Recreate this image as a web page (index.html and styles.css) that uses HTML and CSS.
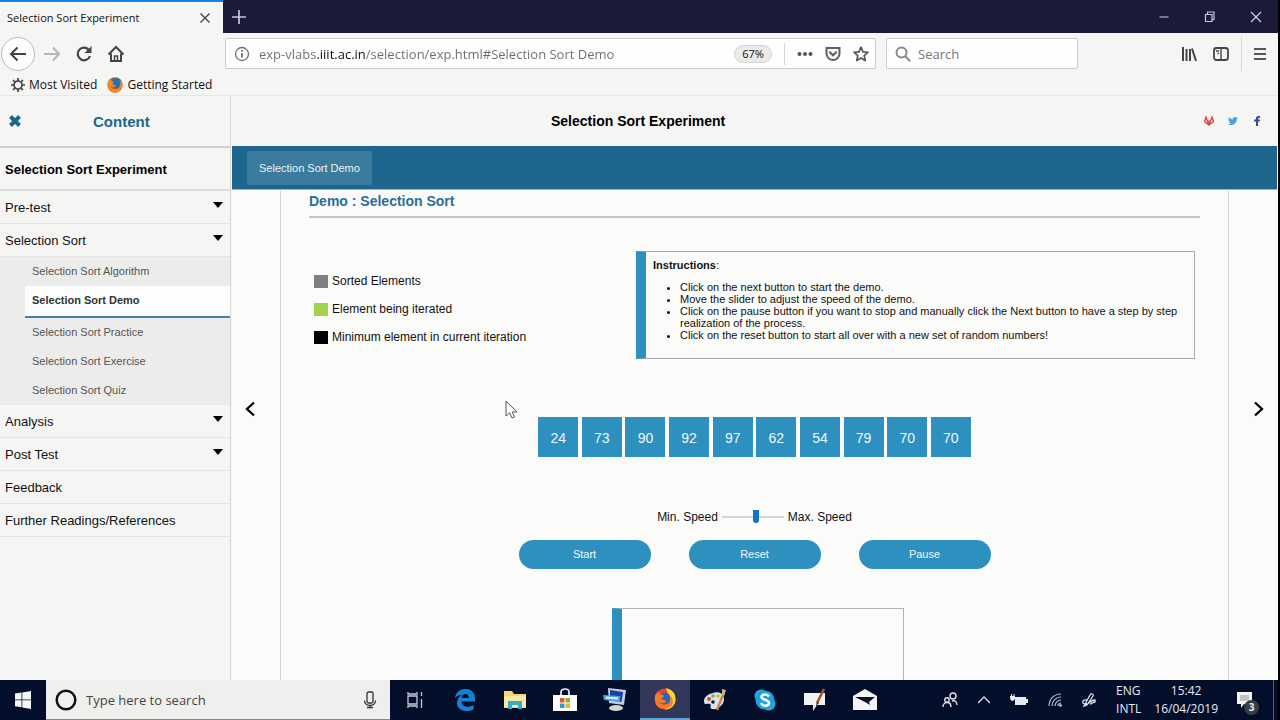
FILE: index.html
```html
<!DOCTYPE html>
<html lang="en">
<head>
    <meta charset="UTF-8">
    <meta name="viewport" content="width=device-width, initial-scale=1.0">
    <title>Selection Sort Experiment</title>
    <link rel="stylesheet" href="styles.css">
</head>
<body>
    <!-- browser window -->
    <div class="titlebar">
        <div class="tab">
            <span>Selection Sort Experiment</span>
            <button class="icon-btn" aria-label="Close tab">
                <svg width="12" height="12" viewBox="0 0 12 12"><path d="M1.5 1.5l9 9M10.5 1.5l-9 9" stroke="#444" stroke-width="1.4"/></svg>
            </button>
        </div>
        <button class="icon-btn new-tab" aria-label="New tab">
            <svg width="14" height="14" viewBox="0 0 14 14"><path d="M7 0v14M0 7h14" stroke="#c8c7d6" stroke-width="1.7"/></svg>
        </button>
        <div class="window-buttons">
            <button class="icon-btn" aria-label="Minimize"><svg width="12" height="12" viewBox="0 0 12 12"><path d="M1.500 6h9" stroke="#77748f" stroke-width="2"/></svg></button>
            <button class="icon-btn" aria-label="Restore"><svg width="12" height="12" viewBox="0 0 12 12" fill="none" stroke="#c8c7d6" stroke-width="1.200"><path d="M1.500 3.500h6.500v7h-6.500zM3.500 3.500v-2.500h6.500v7.500h-2"/></svg></button>
            <button class="icon-btn" aria-label="Close"><svg width="12" height="12" viewBox="0 0 12 12"><path d="M1 1l10 10M11 1L1 11" stroke="#d5d4e0" stroke-width="1.200"/></svg></button>
        </div>
    </div>
    <div class="toolbar">
        <div class="nav-buttons">
            <button class="icon-btn back" aria-label="Back"><svg width="18" height="16" viewBox="0 0 18 16" fill="none" stroke="#444" stroke-width="2"><path d="M17 8H2M8.500 1.500L2 8l6.500 6.500"/></svg></button>
            <button class="icon-btn" aria-label="Forward"><svg width="18" height="16" viewBox="0 0 18 16" fill="none" stroke="#b5b5b5" stroke-width="2"><path d="M1 8h15M10 1.500L16 8l-6 6.500"/></svg></button>
            <button class="icon-btn" aria-label="Reload"><svg width="18" height="18" viewBox="0 0 18 18"><path d="M15 11a6.300 6.300 0 1 1-1.500-6.500" fill="none" stroke="#444" stroke-width="2.200"/><path d="M16.500 1v7h-7z" fill="#444"/></svg></button>
            <button class="icon-btn" aria-label="Home"><svg width="18" height="18" viewBox="0 0 18 18" fill="none" stroke="#444" stroke-width="2"><path d="M1.500 9.500L9 2l7.500 7.500M4 8.500V16h10V8.500"/><path d="M7.500 16v-5h3v5" stroke-width="1.500"/></svg></button>
        </div>
        <div class="address">
            <svg width="16" height="16" viewBox="0 0 16 16" fill="none" stroke="#707070"><circle cx="8" cy="8" r="6.500" stroke-width="1.300"/><path d="M8 7v4.500M8 4v1.700" stroke-width="1.800"/></svg>
            <input type="text" id="url" aria-label="Address" value="exp-vlabs.iiit.ac.in/selection/exp.html#Selection Sort Demo">
            <button class="zoom-level">67%</button>
            <span class="divider"></span>
            <button class="icon-btn" aria-label="Page actions"><svg width="16" height="16" viewBox="0 0 16 16" fill="#555"><circle cx="2.500" cy="8" r="2"/><circle cx="8" cy="8" r="2"/><circle cx="13.500" cy="8" r="2"/></svg></button>
            <button class="icon-btn" aria-label="Save to Pocket"><svg width="16" height="16" viewBox="0 0 16 16" fill="none" stroke="#606060" stroke-width="2"><path d="M1.500 2h13v5.500a6.500 6.500 0 0 1-13 0z"/><path d="M4.800 6.200L8 9.300l3.200-3.100" stroke-linecap="round"/></svg></button>
            <button class="icon-btn" aria-label="Bookmark"><svg width="16" height="16" viewBox="0 0 16 16" fill="none" stroke="#555" stroke-width="1.700" stroke-linejoin="round"><path d="M8 1.200l2 4.600 4.900.5-3.700 3.300 1.100 5L8 12.100l-4.300 2.500 1.100-5L1.100 6.300 6 5.800z"/></svg></button>
        </div>
        <div class="search">
            <svg width="16" height="16" viewBox="0 0 16 16" fill="none" stroke="#888" stroke-width="2"><circle cx="6.500" cy="6.500" r="5"/><path d="M10.200 10.200l5 5"/></svg>
            <input type="text" aria-label="Search" placeholder="Search">
        </div>
        <div class="tools">
            <button class="icon-btn" aria-label="Library"><svg width="16" height="16" viewBox="0 0 16 16" stroke="#444" stroke-width="2"><path d="M2 1v14M5.500 3v12M9 3v12M11 2.500L15 15"/></svg></button>
            <button class="icon-btn" aria-label="Sidebars"><svg width="16" height="16" viewBox="0 0 16 16" fill="none" stroke="#444" stroke-width="1.800"><rect x="1" y="2" width="14" height="12" rx="2.500"/><path d="M8 2v12M3 5h3M4.500 7.500H6" stroke-width="1.400"/></svg></button>
            <span class="divider"></span>
            <button class="icon-btn" aria-label="Menu"><svg width="12" height="14" viewBox="0 0 12 14" stroke="#555" stroke-width="2"><path d="M0 2h12M0 7h12M0 12h12"/></svg></button>
        </div>
    </div>
    <div class="bookmarks">
        <a href="#"><svg width="14" height="14" viewBox="0 0 14 14" fill="none" stroke="#444"><circle cx="7" cy="7" r="4" stroke-width="1.700"/><path d="M7 0v3M7 11v3M0 7h3M11 7h3M2 2l2 2M10 10l2 2M12 2l-2 2M4 10l-2 2" stroke-width="1.700"/></svg>Most Visited</a>
        <a href="#"><svg width="16" height="16" viewBox="0 0 22 22"><circle cx="11" cy="11" r="10.500" fill="#e8502a"/><circle cx="12.500" cy="8.500" r="7.500" fill="#1f76b5"/><path d="M1 7c1-2 2-3 3-5 0 3 3 3 4 4 2 2 0 3-1 4 2 0 3 1 5 2-1 3-6 3-8-1 0 5 8 8 12 4 3-3 3-7 1-11 5 4 5 10 2 14-5 6-15 3-17-3-1-3-1-5-1-8z" fill="#f58a20"/></svg>Getting Started</a>
    </div>

    <!-- page -->
    <div class="page">
        <nav class="sidebar">
            <div class="sidebar-head">
                <button class="icon-btn" aria-label="Close menu"><svg width="14" height="14" viewBox="0 0 14 14"><path d="M2.500 2.500l9 9M11.500 2.500l-9 9" stroke="#1d678f" stroke-width="4"/></svg></button>
                <h2>Content</h2>
            </div>
            <a class="experiment" href="#">Selection Sort Experiment</a>
            <a class="item" href="#">Pre-test<span class="caret"></span></a>
            <a class="item" href="#">Selection Sort<span class="caret"></span></a>
            <div class="submenu">
                <a href="#">Selection Sort Algorithm</a>
                <a class="active" href="#">Selection Sort Demo</a>
                <a href="#">Selection Sort Practice</a>
                <a href="#">Selection Sort Exercise</a>
                <a href="#">Selection Sort Quiz</a>
            </div>
            <a class="item" href="#">Analysis<span class="caret"></span></a>
            <a class="item" href="#">Post Test<span class="caret"></span></a>
            <a class="item" href="#">Feedback</a>
            <a class="item" href="#">Further Readings/References</a>
        </nav>
        <div class="main">
            <header class="page-head">
                <h1>Selection Sort Experiment</h1>
                <div class="social">
                    <a href="#" aria-label="GitLab"><svg width="10" height="10" viewBox="0 0 20 20" fill="none" stroke="#d63a3a" stroke-width="2.500"><path d="M4 2L1 11l9 7 9-7-3-9-3 8H7zM7 10l3 8 3-8"/></svg></a>
                    <a href="#" aria-label="Twitter"><svg width="10" height="10" viewBox="0 0 24 24" fill="#4a9fe0"><path d="M24 4.600a10 10 0 0 1-2.800.8 5 5 0 0 0 2.100-2.700 10 10 0 0 1-3.100 1.200 4.900 4.900 0 0 0-8.400 4.500A14 14 0 0 1 1.700 3.200a4.900 4.900 0 0 0 1.500 6.500 5 5 0 0 1-2.200-.6c0 2.300 1.600 4.400 3.900 4.900a5 5 0 0 1-2.200.1 4.900 4.900 0 0 0 4.600 3.400A10 10 0 0 1 0 19.500 14 14 0 0 0 21.500 7.100 10 10 0 0 0 24 4.600z"/></svg></a>
                    <a href="#" aria-label="Facebook"><svg width="10" height="10" viewBox="0 0 20 20" fill="#35508f"><path d="M8 20v-9H4V7h4V5c0-3.500 2-5 5-5h3v4h-2c-1.500 0-2 .5-2 1.500V7h4l-.6 4H12v9z"/></svg></a>
                </div>
            </header>
            <div class="tab-bar">
                <button>Selection Sort Demo</button>
            </div>
            <div class="content">
                <button class="arrow" aria-label="Previous"><svg width="12" height="16" viewBox="0 0 12 16"><path d="M10 1.500L3 8l7 6.500" fill="none" stroke="#000" stroke-width="2.300"/></svg></button>
                <div class="panel">
                    <h2>Demo : Selection Sort</h2>
                    <div class="info">
                        <ul class="legend">
                            <li><span class="swatch sorted"></span>Sorted Elements</li>
                            <li><span class="swatch iterated"></span>Element being iterated</li>
                            <li><span class="swatch minimum"></span>Minimum element in current iteration</li>
                        </ul>
                        <div class="instructions">
                            <p><b>Instructions</b>:</p>
                            <ul>
                                <li>Click on the next button to start the demo.</li>
                                <li>Move the slider to adjust the speed of the demo.</li>
                                <li>Click on the pause button if you want to stop and manually click the Next button to have a step by step realization of the process.</li>
                                <li>Click on the reset button to start all over with a new set of random numbers!</li>
                            </ul>
                        </div>
                    </div>
                    <div class="array">
                        <span>24</span>
                        <span>73</span>
                        <span>90</span>
                        <span>92</span>
                        <span>97</span>
                        <span>62</span>
                        <span>54</span>
                        <span>79</span>
                        <span>70</span>
                        <span>70</span>
                    </div>
                    <div class="speed">
                        <label for="speed">Min. Speed</label>
                        <input type="range" id="speed" min="0" max="100" value="55">
                        <label for="speed">Max. Speed</label>
                    </div>
                    <div class="controls">
                        <button>Start</button>
                        <button>Reset</button>
                        <button>Pause</button>
                    </div>
                    <div class="output"></div>
                </div>
                <button class="arrow" aria-label="Next"><svg width="12" height="16" viewBox="0 0 12 16"><path d="M2 1.500L9 8l-7 6.500" fill="none" stroke="#000" stroke-width="2.300"/></svg></button>
            </div>
        </div>
    </div>

    <!-- windows taskbar -->
    <div class="taskbar">
        <button class="start" aria-label="Start menu"><svg width="16" height="18" viewBox="0 0 16 18" fill="#f4f6fa"><path d="M0 2.500l6.500-1v7H0zM7.300 1.400L16 0v8.500H7.300zM0 9.300h6.500v7l-6.500-1zM7.300 9.300H16V18l-8.700-1.500z"/></svg></button>
        <div class="task-search">
            <svg width="22" height="22" viewBox="0 0 22 22"><circle cx="11" cy="11" r="9.300" fill="none" stroke="#111" stroke-width="2.500"/></svg>
            <input type="text" aria-label="Type here to search" placeholder="Type here to search">
            <svg width="14" height="18" viewBox="0 0 14 18" fill="none" stroke="#333" stroke-width="1.300"><rect x="4" y="1" width="6" height="11" rx="1.500"/><path d="M1.500 9.500c0 6.500 11 6.500 11 0M7 14v3M4 16.500h6"/></svg>
        </div>
        <div class="apps">
            <button aria-label="Task view"><svg width="18" height="18" viewBox="0 0 18 18" fill="none" stroke="#c6cbd8" stroke-width="1.300"><path d="M2 5h9v8H2zM2 1v2h9V1M2 17v-2h9v2M15.500 1v4M15.500 8v9"/></svg></button>
            <button aria-label="Edge"><svg width="22" height="24" viewBox="0 0 22 24"><path d="M1 10C2 3 7 1 12 1c6 0 9 4.500 9 10v2.500H7.500c.2 6 7.500 6.500 12 3.500v4.500C12 25 3 22.500 3 15c0-4 2.500-6.500 5-8-3 .3-5.500 1-7 3zM7.500 10H15c0-5-7-5.500-7.500 0z" fill="#1482d4"/></svg></button>
            <button aria-label="File Explorer"><svg width="22" height="20" viewBox="0 0 22 20"><path d="M0 1h8l2 3h12v14H0z" fill="#f3d777"/><path d="M0 6h22v11H0z" fill="#fae89f"/><path d="M4 11h14v8h-4v-4H8v4H4z" fill="#37abd0"/></svg></button>
            <button aria-label="Store"><svg width="24" height="24" viewBox="0 0 24 24"><path d="M8 7V4c0-4 8-4 8 0v3" fill="none" stroke="#eee" stroke-width="1.700"/><path d="M0 7h24v16H0z" fill="#fff"/><path d="M7 10h4.500v4.500H7z" fill="#e2572c"/><path d="M12.500 10H17v4.500h-4.500z" fill="#83b530"/><path d="M7 15.500h4.500V20H7z" fill="#2c9ad8"/><path d="M12.500 15.500H17V20h-4.500z" fill="#f0b428"/></svg></button>
            <button aria-label="Remote desktop"><svg width="26" height="26" viewBox="0 0 26 26"><path d="M6 1l18 2-2 15-15-2z" fill="#c5cddb"/><path d="M8 3l13 2-1.500 10L8 13.500z" fill="#1b3fa8"/><path d="M1 8l17 1v6L2 13z" fill="#4aa6e6"/><path d="M4 10.500l12 1" stroke="#e0f2ff" stroke-width="2"/><ellipse cx="14" cy="21" rx="7" ry="3" fill="#d5d4cc"/></svg></button>
            <button class="open" aria-label="Firefox"><svg width="22" height="22" viewBox="0 0 22 22"><circle cx="11" cy="11" r="10.500" fill="#ec432e"/><path d="M12 0c8 2 10 7 9.500 13-1 6-6 8.500-11 8.500 5-3 7-7 5-13-1-3-3-5-3.500-8.500z" fill="#ffd43b"/><circle cx="10.500" cy="10.500" r="6" fill="#2867b8"/><path d="M1 8c1-2 2-3 3-5 0 3 3 3 5 4 2 1 0 3-2 4 2 0 3 1 5 2-1 3-5 3-7 0 1 4 6 5 10 2 3-3 1-7-1-9 4 2 6 7 4 11-4 6-14 4-16-1-1-3-1-5-1-8z" fill="#f67b24"/></svg></button>
            <button aria-label="Paint"><svg width="24" height="24" viewBox="0 0 24 24"><path d="M10 5c6-2 11 1 11 6 0 6-6 11-12 10-3-1 0-4-2-5S1 18 1 13c0-4 4-7 9-8z" fill="#d8e5f0"/><circle cx="6" cy="11" r="2" fill="#d54a35"/><circle cx="10" cy="8" r="1.800" fill="#78b642"/><circle cx="15" cy="8" r="1.800" fill="#e4b62f"/><circle cx="10" cy="14" r="1.800" fill="#10192d"/><path d="M21 4L14 22" stroke="#ce8440" stroke-width="2.400"/><path d="M19 1l4 1-2 6-2-1z" fill="#d5b17e"/></svg></button>
            <button aria-label="Skype"><svg width="22" height="22" viewBox="0 0 22 22"><circle cx="7" cy="7" r="6.500" fill="#29a9e1"/><circle cx="15" cy="15" r="6.500" fill="#29a9e1"/><circle cx="11" cy="11" r="9.500" fill="#1ca2de"/><path d="M15 7.500C13 4.500 7.500 5 7.500 8s7.500 2.500 7.500 6c0 3.500-6.500 3.500-8 0" fill="none" stroke="#fff" stroke-width="2.500"/></svg></button>
            <button aria-label="Whiteboard"><svg width="22" height="24" viewBox="0 0 22 24"><path d="M0 5h21v12h-8l-4 6v-6H0z" fill="#f3f3f3"/><path d="M20 1l-7 14" stroke="#a95430" stroke-width="2.600"/><path d="M13 14l-1 4 3-3z" fill="#222"/></svg></button>
            <button aria-label="Mail"><svg width="26" height="22" viewBox="0 0 26 22"><path d="M1 7L13 0l12 7v14H1z" fill="#f4f4f4"/><path d="M3 8h20l-6 5 1 3-5-3z" fill="#07112f"/></svg></button>
        </div>
        <div class="tray">
            <button aria-label="People"><svg width="16" height="16" viewBox="0 0 16 16" fill="none" stroke="#dfe2ea" stroke-width="1.400"><circle cx="11" cy="4" r="3"/><circle cx="5" cy="8" r="2.200"/><path d="M1 15c0-6 8-6 8 0M10 9c3-1 5 1 5 4"/></svg></button>
            <button aria-label="Hidden icons"><svg width="12" height="8" viewBox="0 0 12 8"><path d="M0 7l6-6 6 6" fill="none" stroke="#dfe2ea" stroke-width="1.300"/></svg></button>
            <button aria-label="Battery"><svg width="18" height="14" viewBox="0 0 18 14" fill="#e7e9ef"><path d="M5 4h11v8H5z"/><path d="M16 6h2v4h-2z"/><path d="M0 3h5v3l-2 2H2L0 6zM1 1h1v2H1zM3.500 1h1v2h-1z"/></svg></button>
            <button aria-label="Network"><svg width="14" height="14" viewBox="0 0 14 14" fill="none" stroke="#b5bac8" stroke-width="1.200"><path d="M1 13C1 6 6 1 13 1M4 13c0-5 4-9 9-9M7 13c0-3 3-6 6-6M10 13c0-2 1-3 3-3"/><circle cx="12.500" cy="12.500" r=".8" fill="#fff"/></svg></button>
            <button aria-label="Windows Ink"><svg width="14" height="16" viewBox="0 0 14 16" fill="none" stroke="#dfe2ea" stroke-width="1.300"><path d="M2 14L8 3c1-2 4-1 3 1L5 13l-3 1zM5 8c-5-1-6 4-1 4 4 0 4-4 9-4v2c-3 0-3 2-5 2"/></svg></button>
            <div class="tray-text"><span>ENG</span><span>INTL</span></div>
            <div class="tray-text clock"><span>15:42</span><span>16/04/2019</span></div>
            <button class="notify" aria-label="Notifications"><svg width="18" height="18" viewBox="0 0 18 18"><path d="M1 1h15v12H8l-3 4v-4H1z" fill="#f4f4f4"/><path d="M4 4h9v6H4z" fill="#bfc3ca"/></svg><span class="badge">3</span></button>
        </div>
    </div>
    <svg class="pointer" width="13" height="19" viewBox="0 0 13 19"><path d="M1 1v15l3.500-3.200L7 18l2.500-1-2.300-5H12z" fill="#fff" stroke="#555"/></svg>
</body>
</html>
```
FILE: styles.css
```css
*
{
    margin: 0;
    padding: 0;
    box-sizing: border-box;
}
body
{
    height: 100vh;
    display: flex;
    flex-direction: column;
    overflow: hidden;
    border-right: 2px solid black;
    background-color: #f5f6f4;
    font-family: "Liberation Sans", Arial, sans-serif;
    font-size: 13px;
    color: #111;
}
a
{
    color: inherit;
    text-decoration: none;
}
button
{
    border: none;
    background: none;
    font-family: inherit;
    color: inherit;
    cursor: pointer;
}
input
{
    border: none;
    background: none;
    outline: none;
    min-width: 0;
}
svg
{
    display: block;
    flex: none;
}
.icon-btn
{
    display: flex;
    align-items: center;
    justify-content: center;
    flex: none;
}

/* browser */
.titlebar, .toolbar, .bookmarks, .taskbar
{
    display: flex;
    align-items: center;
    flex: none;
    font-family: "Open Sans", "Noto Sans", sans-serif;
}
.titlebar
{
    height: 33px;
    background-color: #1b1a39;
}
.tab
{
    width: 223px;
    height: 33px;
    padding: 0 12px 0 7px;
    display: flex;
    align-items: center;
    justify-content: space-between;
    border-top: 2px solid #1683e8;
    background-color: #f5f6f4;
    font-size: 11px;
}
.new-tab
{
    margin-left: 9px;
}
.window-buttons
{
    display: flex;
    gap: 34px;
    margin-left: auto;
    padding-right: 16px;
}
.toolbar
{
    height: 41px;
    padding-right: 12px;
}
.nav-buttons
{
    width: 225px;
    display: flex;
    align-items: center;
    gap: 14px;
    padding-left: 1px;
    flex: none;
}
.back
{
    width: 34px;
    height: 34px;
    border: 1px solid #bbb;
    border-radius: 50%;
    background-color: #fcfdfc;
    margin-right: -6px;
}
.address, .search
{
    height: 31px;
    display: flex;
    align-items: center;
    border: 1px solid #ccc;
    border-radius: 2px;
    background-color: #fdfefd;
}
.address
{
    flex: 1;
    max-width: 651px;
    padding: 0 6px 0 8px;
    gap: 12px;
}
.address input
{
    flex: 1;
    margin-left: -3px;
    font-family: inherit;
    font-size: 13px;
    /* the domain is darker than the rest of the address */
    color: transparent;
    background: linear-gradient(90deg, #6c6c6c 58px, #111 58px, #111 107px, #6c6c6c 107px);
    background-clip: text;
    -webkit-background-clip: text;
}
.zoom-level
{
    width: 38px;
    height: 18px;
    border: 1px solid #d5d5d5;
    border-radius: 9px;
    background-color: #ebebeb;
    font-size: 11px;
    line-height: 16px;
}
.divider
{
    width: 1px;
    height: 22px;
    background-color: #d5d5d5;
}
.search
{
    width: 192px;
    margin-left: 10px;
    padding-left: 8px;
    gap: 7px;
}
.search input
{
    flex: 1;
    font-family: inherit;
    font-size: 13px;
}
.search input::placeholder
{
    color: #777;
}
.tools
{
    display: flex;
    align-items: center;
    gap: 16px;
    margin-left: auto;
}
.tools .divider
{
    height: 34px;
    margin: 0 -4px;
}
.bookmarks
{
    height: 21px;
    padding-left: 11px;
    gap: 10px;
    font-size: 12px;
}
.bookmarks a
{
    display: flex;
    align-items: center;
    gap: 4px;
}

/* page */
.page
{
    flex: 1;
    min-height: 0;
    display: flex;
    border-top: 1px solid #e6e7e6;
}
.sidebar
{
    width: 231px;
    flex: none;
    border-right: 1px solid #d4d5d4;
    overflow: hidden;
}
.sidebar-head
{
    height: 52px;
    padding-left: 8px;
    display: flex;
    align-items: center;
    border-bottom: 2px solid #d0d1d0;
}
.sidebar-head h2
{
    margin-left: 71px;
    font-size: 15px;
    color: #1d678f;
}
.experiment
{
    height: 43px;
    display: block;
    padding-left: 5px;
    border-bottom: 2px solid #dadbda;
    font-size: 13px;
    font-weight: bold;
    line-height: 43px;
    color: black;
}
.item
{
    height: 33px;
    padding: 0 7px 0 5px;
    display: flex;
    justify-content: space-between;
    border-bottom: 1px solid #e3e4e3;
    line-height: 33px;
}
.caret
{
    width: 10px;
    height: 6px;
    margin-top: 11px;
    background-color: black;
    clip-path: polygon(0 0, 100% 0, 50% 100%);
}
.submenu
{
    padding-left: 25px;
    background-color: #ecedeb;
    font-size: 11px;
    color: #555;
}
.submenu a
{
    display: block;
    height: 29px;
    padding-left: 7px;
    line-height: 29px;
}
.submenu .active
{
    height: 32px;
    border-bottom: 2px solid #3d80a8;
    background-color: #fcfdfc;
    font-weight: bold;
    color: #333;
}
.main
{
    flex: 1;
    min-width: 0;
    display: flex;
    flex-direction: column;
    padding: 0 1px;
}
.page-head
{
    height: 50px;
    flex: none;
    padding: 0 15px 0 319px;
    display: flex;
    align-items: center;
    justify-content: space-between;
}
.page-head h1
{
    font-size: 14px;
    color: black;
}
.social
{
    display: flex;
    gap: 14px;
}
.tab-bar
{
    height: 44px;
    flex: none;
    padding: 5px 15px;
    border-bottom: 1px solid #8dbbd2;
    background-color: #1d678f;
}
.tab-bar button
{
    height: 34px;
    padding: 0 12px;
    border-radius: 2px;
    background-color: #3b7b9e;
    font-size: 11px;
    color: #e9f2f7;
}
.content
{
    flex: 1;
    min-height: 0;
    display: flex;
    background-color: #fbfcfa;
}
.arrow
{
    width: 48px;
    flex: none;
    display: flex;
    justify-content: center;
    padding-top: 211px;
}
.arrow:first-child
{
    padding-right: 12px;
}
.arrow:last-child
{
    padding-left: 12px;
}
.panel
{
    flex: 1;
    min-width: 0;
    overflow: hidden;
    padding: 0 28px;
    border-left: 1px solid #d6d7d6;
    border-right: 1px solid #d6d7d6;
}
.panel h2
{
    padding-bottom: 4px;
    border-bottom: 2px solid #c4c5c4;
    font-size: 14px;
    line-height: 22px;
    color: #2a6e98;
}
.info
{
    display: flex;
    justify-content: space-between;
    margin-top: 33px;
    padding: 0 5px;
}
.legend
{
    list-style: none;
    padding-top: 16px;
    font-size: 12px;
}
.legend li
{
    display: flex;
    align-items: center;
    gap: 4px;
    height: 28px;
}
.swatch
{
    width: 14px;
    height: 13px;
}
.sorted
{
    background-color: #808080;
}
.iterated
{
    background-color: #a4d152;
}
.minimum
{
    background-color: black;
}
.instructions
{
    width: 559px;
    height: 108px;
    padding: 7px 12px 0 7px;
    border: 1px solid #aaa;
    border-left: 10px solid #2e90be;
    font-size: 11px;
    line-height: 12px;
}
.instructions ul
{
    margin-top: 10px;
    padding-left: 27px;
}
.array
{
    margin-top: 58px;
    text-align: center;
    line-height: 40px;
    height: 40px;
}
.array span
{
    display: inline-block;
    width: 40px;
    height: 40px;
    background-color: #2e90be;
    font-size: 14px;
    line-height: 42px;
    color: #eef8fc;
    vertical-align: top;
}
.speed
{
    height: 20px;
    margin-top: 50px;
    display: flex;
    align-items: center;
    justify-content: center;
    gap: 4px;
    font-size: 12px;
}
.speed input
{
    appearance: none;
    width: 62px;
    height: 14px;
}
.speed input::-webkit-slider-runnable-track
{
    height: 2px;
    background-color: #d4d6d6;
}
.speed input::-webkit-slider-thumb
{
    appearance: none;
    width: 6px;
    height: 13px;
    margin-top: -6px;
    border-radius: 0 0 3px 3px;
    background-color: #0c76c4;
}
.controls
{
    margin-top: 13px;
    display: flex;
    justify-content: center;
    gap: 38px;
}
.controls button
{
    width: 132px;
    height: 29px;
    padding-bottom: 2px;
    border-radius: 15px;
    background-color: #2e90be;
    font-size: 11px;
    color: #eef8fc;
}
.output
{
    width: 292px;
    height: 120px;
    margin: 39px 0 0 34%;
    border: 1px solid #b4b5b4;
    border-left: 10px solid #2e90be;
}

/* taskbar */
.taskbar
{
    height: 40px;
    background-color: #030e2b;
    color: #e8eaf0;
}
.taskbar button
{
    height: 40px;
    display: flex;
    align-items: center;
    justify-content: center;
}
.start
{
    width: 46px;
}
.task-search
{
    width: 344px;
    height: 40px;
    padding: 0 13px 0 9px;
    display: flex;
    align-items: center;
    gap: 9px;
    background-color: #eff0ee;
    border-bottom: 1px solid #888;
}
.task-search input
{
    flex: 1;
    font-family: inherit;
    font-size: 13px;
}
.task-search input::placeholder
{
    color: #444;
}
.apps
{
    display: flex;
}
.apps button
{
    width: 50px;
}
.apps .open
{
    background-color: #33385a;
    border-bottom: 2px solid #61a4d8;
}
.tray
{
    height: 40px;
    display: flex;
    align-items: center;
    gap: 20px;
    margin-left: auto;
    margin-right: 4px;
    padding-right: 19px;
    border-right: 1px solid #565d74;
}
.tray-text
{
    display: flex;
    flex-direction: column;
    font-size: 12px;
    line-height: 18px;
}
.clock
{
    align-items: center;
    margin-left: -7px;
    margin-right: -2px;
}
.notify
{
    position: relative;
}
.badge
{
    position: absolute;
    left: 8px;
    top: 20px;
    width: 15px;
    height: 15px;
    border-radius: 50%;
    background-color: #3a3d48;
    font-size: 10px;
    font-weight: bold;
    line-height: 15px;
}
.pointer
{
    position: absolute;
    left: 505px;
    top: 400px;
}
```
